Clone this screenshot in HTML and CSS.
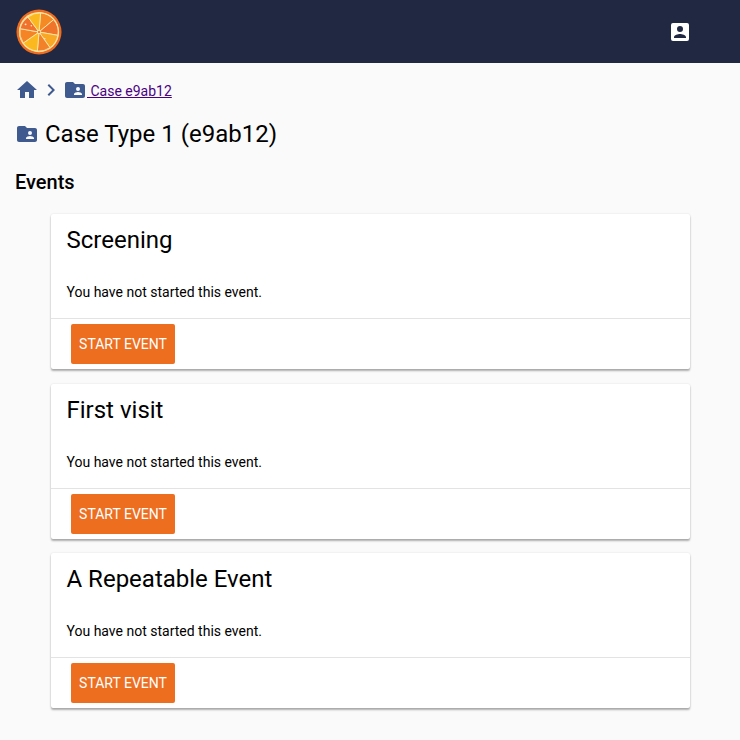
FILE: index.html
```html
<!DOCTYPE html>
<html lang="en">
<head>
<meta charset="utf-8">
<title>Case e9ab12</title>
<link rel="stylesheet" href="styles.css">
</head>
<body>
<header class="topbar">
  <svg class="logo" viewBox="0 0 48 48" width="46" height="46" aria-hidden="true">
    <circle cx="24" cy="24" r="23.5" fill="#ee6c20"/>
    <circle cx="24" cy="24" r="21" fill="#fde3a0"/>
    <g stroke="#fde9b0" stroke-width=".9" stroke-linejoin="round">
      <path d="M24 24 L25.700 4.100 A20 20 0 0 1 39.300 11.100 Z" fill="#f58a24"/>
      <path d="M24 24 L39.300 11.100 A20 20 0 0 1 43.700 27.500 Z" fill="#f0752a"/>
      <path d="M24 24 L43.700 27.500 A20 20 0 0 1 35.500 40.400 Z" fill="#f9a825"/>
      <path d="M24 24 L35.500 40.400 A20 20 0 0 1 22.300 43.900 Z" fill="#f3812a"/>
      <path d="M24 24 L22.300 43.900 A20 20 0 0 1 7.600 35.500 Z" fill="#fbb91f"/>
      <path d="M24 24 L7.600 35.500 A20 20 0 0 1 4.300 20.500 Z" fill="#f58426"/>
      <path d="M24 24 L4.300 20.500 A20 20 0 0 1 12.500 8.400 Z" fill="#f0722b"/>
      <path d="M24 24 L12.500 8.400 A20 20 0 0 1 25.700 4.100 Z" fill="#fbb91f"/>
    </g>
    <circle cx="24" cy="24" r="2" fill="#fde9b0"/>
    <circle cx="24" cy="24" r="1.100" fill="#ee6c20"/>
    <circle cx="10" cy="16" r="1" fill="#fde6d0"/>
    <circle cx="16" cy="17.500" r=".8" fill="#fde6d0"/>
    <circle cx="30" cy="31" r=".8" fill="#fde6d0"/>
  </svg>
  <svg class="account" viewBox="0 0 24 24" width="24" height="24" aria-hidden="true">
    <path fill="#fff" d="M3 5v14a2 2 0 0 0 2 2h14a2 2 0 0 0 2-2V5a2 2 0 0 0-2-2H5a2 2 0 0 0-2 2zm12 4a3 3 0 1 1-6 0 3 3 0 0 1 6 0zm-9 8c0-2 4-3.100 6-3.100s6 1.100 6 3.100v1H6v-1z"/>
  </svg>
</header>
<main class="content">
  <nav class="crumbs">
    <svg class="crumb-icon" viewBox="0 0 24 24" width="24" height="24" aria-hidden="true"><path d="M10 20v-6h4v6h5v-8h3L12 3 2 12h3v8z"/></svg>
    <svg class="crumb-icon" viewBox="0 0 24 24" width="24" height="24" aria-hidden="true"><path d="M10 6L8.590 7.410 13.170 12l-4.580 4.590L10 18l6-6z"/></svg>
    <svg class="crumb-icon" viewBox="0 0 24 24" width="24" height="24" aria-hidden="true"><path d="M20 6h-8l-2-2H4c-1.100 0-2 .9-2 2v12c0 1.100.9 2 2 2h16c1.100 0 2-.9 2-2V8c0-1.100-.9-2-2-2zm-5 3a2 2 0 1 1 0 4 2 2 0 0 1 0-4zm4 8h-8v-1c0-1.330 2.670-2 4-2s4 .67 4 2v1z"/></svg>
    <a class="crumb-link" href="#">&nbsp;Case e9ab12</a>
  </nav>
  <h1 class="title">
    <svg class="crumb-icon" viewBox="0 0 24 24" width="24" height="24" aria-hidden="true"><path d="M20 6h-8l-2-2H4c-1.100 0-2 .9-2 2v12c0 1.100.9 2 2 2h16c1.100 0 2-.9 2-2V8c0-1.100-.9-2-2-2zm-5 3a2 2 0 1 1 0 4 2 2 0 0 1 0-4zm4 8h-8v-1c0-1.330 2.670-2 4-2s4 .67 4 2v1z"/></svg>
    <span>Case Type 1 (e9ab12)</span>
  </h1>
  <h2 class="section">Events</h2>
  <section class="cards">
    <article class="card">
      <h3 class="card-title">Screening</h3>
      <p class="card-text">You have not started this event.</p>
      <div class="card-actions"><button class="btn">START EVENT</button></div>
    </article>
    <article class="card">
      <h3 class="card-title">First visit</h3>
      <p class="card-text">You have not started this event.</p>
      <div class="card-actions"><button class="btn">START EVENT</button></div>
    </article>
    <article class="card">
      <h3 class="card-title">A Repeatable Event</h3>
      <p class="card-text">You have not started this event.</p>
      <div class="card-actions"><button class="btn">START EVENT</button></div>
    </article>
  </section>
</main>
</body>
</html>
```
FILE: styles.css
```css
* { box-sizing: border-box; }
html, body { margin: 0; padding: 0; }
body {
  background: #fafafa;
  color: #000;
  font-family: Roboto, "Liberation Sans", sans-serif;
  font-size: 14px;
  height: 740px;
  overflow: hidden;
}
.topbar {
  height: 63px;
  background: #212842;
  display: flex;
  align-items: center;
  justify-content: space-between;
  padding: 0 48px 0 16px;
}
.logo { display: block; }
.account { display: block; }
.content { padding: 15px 50px 0 15px; }
.crumbs {
  display: flex;
  align-items: center;
  height: 24px;
}
.crumb-icon { fill: #3f5a8e; flex: none; display: block; }
.crumb-link {
  color: #4b0082;
  font-size: 14px;
  padding-top: 1px;
}
.title {
  display: flex;
  align-items: center;
  gap: 6px;
  margin: 16px 0 0;
  height: 32px;
  font-size: 24px;
  font-weight: 400;
}
.section {
  margin: 20px 0 0;
  height: 24px;
  line-height: 24px;
  font-size: 20px;
  font-weight: 500;
}
.cards {
  display: flex;
  flex-direction: column;
  gap: 14.500px;
  margin: 20px 0 0 36px;
}
.card {
  background: #fff;
  border-radius: 2px;
  height: 155px;
  box-shadow: 0 2px 2px rgba(0,0,0,.3), 0 0 2px rgba(0,0,0,.12);
  display: flex;
  flex-direction: column;
}
.card-title {
  margin: 0;
  padding: 10px 15.500px 0;
  font-size: 24px;
  font-weight: 400;
  line-height: 32px;
}
.card-text {
  margin: 0;
  padding: 26px 15.500px 0;
  line-height: 20px;
  height: 62px;
}
.card-actions {
  border-top: 1px solid #e3e3e3;
  padding: 5px 20px;
}
.btn {
  display: block;
  width: 104px;
  height: 40px;
  padding: 0;
  border: 0;
  border-radius: 2px;
  background: #ed6e1f;
  color: #fff;
  font: 400 14px Roboto, "Liberation Sans", sans-serif;
}
```
